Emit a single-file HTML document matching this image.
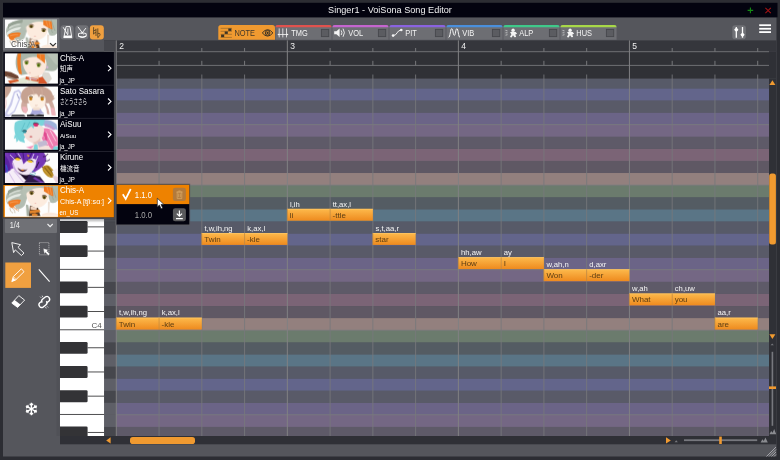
<!DOCTYPE html>
<html><head><meta charset="utf-8"><title>Singer1 - VoiSona Song Editor</title>
<style>html,body{margin:0;padding:0;background:#2c2d33;overflow:hidden}body{width:780px;height:460px}svg{display:block;will-change:transform}</style>
</head><body>
<svg width="780" height="460" viewBox="0 0 780 460" font-family="Liberation Sans, Noto Sans CJK JP, sans-serif">
<defs>
<linearGradient id="ng" x1="0" y1="0" x2="0" y2="1"><stop offset="0" stop-color="#fdba4c"/><stop offset="1" stop-color="#ee8a1e"/></linearGradient>
<linearGradient id="sh" x1="0" y1="0" x2="0" y2="1"><stop offset="0" stop-color="#000" stop-opacity="0.380"/><stop offset="1" stop-color="#000" stop-opacity="0"/></linearGradient>
<filter id="bl" x="-10%" y="-10%" width="120%" height="120%"><feGaussianBlur stdDeviation="0.6"/></filter>
<clipPath id="gridclip"><rect x="104" y="78.7" width="665" height="357.3"/></clipPath>
<clipPath id="pianoclip"><rect x="59.8" y="78.7" width="44.4" height="357.3"/></clipPath>
</defs>
<rect x="0.00" y="0.00" width="780.00" height="460.00" fill="#2c2d33" />
<rect x="3.00" y="17.30" width="773.50" height="439.20" fill="#55565c" />
<rect x="3.00" y="2.80" width="774.50" height="14.50" fill="#03030f" />
<text x="390.00" y="13.40" font-size="9.15" fill="#f0f0f0" text-anchor="middle">Singer1 - VoiSona Song Editor</text>
<path d="M747.6 10.4h5.6M750.4 7.6v5.6" stroke="#148a14" stroke-width="1.1" fill="none"/>
<path d="M765.4 7.8l5.4 5.4M770.8 7.8l-5.4 5.4" stroke="#a01414" stroke-width="1.1" fill="none"/>
<rect x="104.00" y="40.40" width="672.50" height="11.30" fill="#35363c" />
<rect x="104.00" y="40.40" width="12.30" height="11.30" fill="#46474d" />
<rect x="104.00" y="51.70" width="665.00" height="27.00" fill="#303136" />
<g clip-path="url(#gridclip)">
<rect x="115.80" y="426.86" width="653.20" height="12.14" fill="#5e5a68" />
<rect x="104.00" y="426.86" width="12.30" height="12.14" fill="#46474d" />
<rect x="115.80" y="414.77" width="653.20" height="12.14" fill="#746784" />
<rect x="104.00" y="414.77" width="12.30" height="12.14" fill="#5e5f67" />
<rect x="115.80" y="402.68" width="653.20" height="12.14" fill="#6b6487" />
<rect x="104.00" y="402.68" width="12.30" height="12.14" fill="#5e5f67" />
<rect x="115.80" y="390.59" width="653.20" height="12.14" fill="#595a68" />
<rect x="104.00" y="390.59" width="12.30" height="12.14" fill="#46474d" />
<rect x="115.80" y="378.50" width="653.20" height="12.14" fill="#63658b" />
<rect x="104.00" y="378.50" width="12.30" height="12.14" fill="#5e5f67" />
<rect x="115.80" y="366.41" width="653.20" height="12.14" fill="#575a68" />
<rect x="104.00" y="366.41" width="12.30" height="12.14" fill="#46474d" />
<rect x="115.80" y="354.32" width="653.20" height="12.14" fill="#5a7586" />
<rect x="104.00" y="354.32" width="12.30" height="12.14" fill="#5e5f67" />
<rect x="115.80" y="342.23" width="653.20" height="12.14" fill="#545c63" />
<rect x="104.00" y="342.23" width="12.30" height="12.14" fill="#46474d" />
<rect x="115.80" y="330.14" width="653.20" height="12.14" fill="#6b7b6d" />
<rect x="104.00" y="330.14" width="12.30" height="12.14" fill="#5e5f67" />
<rect x="115.80" y="318.05" width="653.20" height="12.14" fill="#93807e" />
<rect x="104.00" y="318.05" width="12.30" height="12.14" fill="#6b6d79" />
<rect x="115.80" y="305.96" width="653.20" height="12.14" fill="#5f5864" />
<rect x="104.00" y="305.96" width="12.30" height="12.14" fill="#46474d" />
<rect x="115.80" y="293.87" width="653.20" height="12.14" fill="#7b6476" />
<rect x="104.00" y="293.87" width="12.30" height="12.14" fill="#5e5f67" />
<rect x="115.80" y="281.78" width="653.20" height="12.14" fill="#5e5a68" />
<rect x="104.00" y="281.78" width="12.30" height="12.14" fill="#46474d" />
<rect x="115.80" y="269.69" width="653.20" height="12.14" fill="#746784" />
<rect x="104.00" y="269.69" width="12.30" height="12.14" fill="#5e5f67" />
<rect x="115.80" y="257.60" width="653.20" height="12.14" fill="#6b6487" />
<rect x="104.00" y="257.60" width="12.30" height="12.14" fill="#5e5f67" />
<rect x="115.80" y="245.51" width="653.20" height="12.14" fill="#595a68" />
<rect x="104.00" y="245.51" width="12.30" height="12.14" fill="#46474d" />
<rect x="115.80" y="233.42" width="653.20" height="12.14" fill="#63658b" />
<rect x="104.00" y="233.42" width="12.30" height="12.14" fill="#5e5f67" />
<rect x="115.80" y="221.33" width="653.20" height="12.14" fill="#575a68" />
<rect x="104.00" y="221.33" width="12.30" height="12.14" fill="#46474d" />
<rect x="115.80" y="209.24" width="653.20" height="12.14" fill="#5a7586" />
<rect x="104.00" y="209.24" width="12.30" height="12.14" fill="#5e5f67" />
<rect x="115.80" y="197.15" width="653.20" height="12.14" fill="#545c63" />
<rect x="104.00" y="197.15" width="12.30" height="12.14" fill="#46474d" />
<rect x="115.80" y="185.06" width="653.20" height="12.14" fill="#6b7b6d" />
<rect x="104.00" y="185.06" width="12.30" height="12.14" fill="#5e5f67" />
<rect x="115.80" y="172.97" width="653.20" height="12.14" fill="#93807e" />
<rect x="104.00" y="172.97" width="12.30" height="12.14" fill="#5e5f67" />
<rect x="115.80" y="160.88" width="653.20" height="12.14" fill="#5f5864" />
<rect x="104.00" y="160.88" width="12.30" height="12.14" fill="#46474d" />
<rect x="115.80" y="148.79" width="653.20" height="12.14" fill="#7b6476" />
<rect x="104.00" y="148.79" width="12.30" height="12.14" fill="#5e5f67" />
<rect x="115.80" y="136.70" width="653.20" height="12.14" fill="#5e5a68" />
<rect x="104.00" y="136.70" width="12.30" height="12.14" fill="#46474d" />
<rect x="115.80" y="124.61" width="653.20" height="12.14" fill="#746784" />
<rect x="104.00" y="124.61" width="12.30" height="12.14" fill="#5e5f67" />
<rect x="115.80" y="112.52" width="653.20" height="12.14" fill="#6b6487" />
<rect x="104.00" y="112.52" width="12.30" height="12.14" fill="#5e5f67" />
<rect x="115.80" y="100.43" width="653.20" height="12.14" fill="#595a68" />
<rect x="104.00" y="100.43" width="12.30" height="12.14" fill="#46474d" />
<rect x="115.80" y="88.34" width="653.20" height="12.14" fill="#63658b" />
<rect x="104.00" y="88.34" width="12.30" height="12.14" fill="#5e5f67" />
<rect x="115.80" y="76.25" width="653.20" height="12.14" fill="#575a68" />
<rect x="104.00" y="76.25" width="12.30" height="12.14" fill="#46474d" />
<rect x="116.30" y="619.80" width="652.70" height="1.00" fill="#7d7d80" opacity="0.85"/>
<rect x="116.30" y="559.35" width="652.70" height="1.00" fill="#7d7d80" opacity="0.85"/>
<rect x="116.30" y="474.72" width="652.70" height="1.00" fill="#7d7d80" opacity="0.85"/>
<rect x="116.30" y="414.27" width="652.70" height="1.00" fill="#7d7d80" opacity="0.85"/>
<rect x="116.30" y="329.64" width="652.70" height="1.00" fill="#7d7d80" opacity="0.85"/>
<rect x="116.30" y="269.19" width="652.70" height="1.00" fill="#7d7d80" opacity="0.85"/>
<rect x="116.30" y="184.56" width="652.70" height="1.00" fill="#7d7d80" opacity="0.85"/>
<rect x="116.30" y="124.11" width="652.70" height="1.00" fill="#7d7d80" opacity="0.85"/>
<rect x="116.30" y="39.48" width="652.70" height="1.00" fill="#7d7d80" opacity="0.85"/>
</g>
<rect x="104.00" y="51.20" width="665.00" height="1.00" fill="#6e6f73" />
<rect x="116.00" y="64.90" width="653.00" height="1.00" fill="#6e6f73" />
<rect x="115.80" y="40.40" width="1.00" height="395.60" fill="#808083" />
<rect x="158.56" y="48.00" width="1.00" height="3.70" fill="#77787b" />
<rect x="158.56" y="60.80" width="1.00" height="4.60" fill="#77787b" />
<rect x="158.56" y="74.50" width="1.00" height="361.50" fill="#77787b" opacity="0.85"/>
<rect x="201.32" y="48.00" width="1.00" height="3.70" fill="#77787b" />
<rect x="201.32" y="60.80" width="1.00" height="4.60" fill="#77787b" />
<rect x="201.32" y="74.50" width="1.00" height="361.50" fill="#77787b" opacity="0.85"/>
<rect x="244.08" y="48.00" width="1.00" height="3.70" fill="#77787b" />
<rect x="244.08" y="60.80" width="1.00" height="4.60" fill="#77787b" />
<rect x="244.08" y="74.50" width="1.00" height="361.50" fill="#77787b" opacity="0.85"/>
<rect x="286.84" y="40.40" width="1.00" height="395.60" fill="#808083" />
<rect x="329.60" y="48.00" width="1.00" height="3.70" fill="#77787b" />
<rect x="329.60" y="60.80" width="1.00" height="4.60" fill="#77787b" />
<rect x="329.60" y="74.50" width="1.00" height="361.50" fill="#77787b" opacity="0.85"/>
<rect x="372.36" y="48.00" width="1.00" height="3.70" fill="#77787b" />
<rect x="372.36" y="60.80" width="1.00" height="4.60" fill="#77787b" />
<rect x="372.36" y="74.50" width="1.00" height="361.50" fill="#77787b" opacity="0.85"/>
<rect x="415.12" y="48.00" width="1.00" height="3.70" fill="#77787b" />
<rect x="415.12" y="60.80" width="1.00" height="4.60" fill="#77787b" />
<rect x="415.12" y="74.50" width="1.00" height="361.50" fill="#77787b" opacity="0.85"/>
<rect x="457.88" y="40.40" width="1.00" height="395.60" fill="#808083" />
<rect x="500.64" y="48.00" width="1.00" height="3.70" fill="#77787b" />
<rect x="500.64" y="60.80" width="1.00" height="4.60" fill="#77787b" />
<rect x="500.64" y="74.50" width="1.00" height="361.50" fill="#77787b" opacity="0.85"/>
<rect x="543.40" y="48.00" width="1.00" height="3.70" fill="#77787b" />
<rect x="543.40" y="60.80" width="1.00" height="4.60" fill="#77787b" />
<rect x="543.40" y="74.50" width="1.00" height="361.50" fill="#77787b" opacity="0.85"/>
<rect x="586.16" y="48.00" width="1.00" height="3.70" fill="#77787b" />
<rect x="586.16" y="60.80" width="1.00" height="4.60" fill="#77787b" />
<rect x="586.16" y="74.50" width="1.00" height="361.50" fill="#77787b" opacity="0.85"/>
<rect x="628.92" y="40.40" width="1.00" height="395.60" fill="#808083" />
<rect x="671.68" y="48.00" width="1.00" height="3.70" fill="#77787b" />
<rect x="671.68" y="60.80" width="1.00" height="4.60" fill="#77787b" />
<rect x="671.68" y="74.50" width="1.00" height="361.50" fill="#77787b" opacity="0.85"/>
<rect x="714.44" y="48.00" width="1.00" height="3.70" fill="#77787b" />
<rect x="714.44" y="60.80" width="1.00" height="4.60" fill="#77787b" />
<rect x="714.44" y="74.50" width="1.00" height="361.50" fill="#77787b" opacity="0.85"/>
<rect x="757.20" y="48.00" width="1.00" height="3.70" fill="#77787b" />
<rect x="757.20" y="60.80" width="1.00" height="4.60" fill="#77787b" />
<rect x="757.20" y="74.50" width="1.00" height="361.50" fill="#77787b" opacity="0.85"/>
<text x="119.20" y="48.70" font-size="8.5" fill="#f0f0f0" >2</text>
<text x="290.24" y="48.70" font-size="8.5" fill="#f0f0f0" >3</text>
<text x="461.28" y="48.70" font-size="8.5" fill="#f0f0f0" >4</text>
<text x="632.32" y="48.70" font-size="8.5" fill="#f0f0f0" >5</text>
<rect x="116.30" y="317.65" width="42.76" height="11.89" fill="url(#ng)" />
<rect x="116.30" y="317.65" width="42.76" height="0.80" fill="#ffc868" opacity="0.8"/>
<rect x="115.80" y="317.65" width="1.00" height="11.89" fill="#c98b3c" opacity="0.7"/>
<text x="118.80" y="326.65" font-size="8.0" fill="#5c3d12" >Twin</text>
<text x="118.90" y="315.35" font-size="7.7" fill="#f4f4f4" >t,w,ih,ng</text>
<rect x="159.06" y="317.65" width="42.76" height="11.89" fill="url(#ng)" />
<rect x="159.06" y="317.65" width="42.76" height="0.80" fill="#ffc868" opacity="0.8"/>
<rect x="158.56" y="317.65" width="1.00" height="11.89" fill="#c98b3c" opacity="0.7"/>
<text x="161.56" y="326.65" font-size="8.0" fill="#5c3d12" >-kle</text>
<text x="161.66" y="315.35" font-size="7.7" fill="#f4f4f4" >k,ax,l</text>
<rect x="201.82" y="233.02" width="42.76" height="11.89" fill="url(#ng)" />
<rect x="201.82" y="233.02" width="42.76" height="0.80" fill="#ffc868" opacity="0.8"/>
<rect x="201.32" y="233.02" width="1.00" height="11.89" fill="#c98b3c" opacity="0.7"/>
<text x="204.32" y="242.02" font-size="8.0" fill="#5c3d12" >Twin</text>
<text x="204.42" y="230.72" font-size="7.7" fill="#f4f4f4" >t,w,ih,ng</text>
<rect x="244.58" y="233.02" width="42.76" height="11.89" fill="url(#ng)" />
<rect x="244.58" y="233.02" width="42.76" height="0.80" fill="#ffc868" opacity="0.8"/>
<rect x="244.08" y="233.02" width="1.00" height="11.89" fill="#c98b3c" opacity="0.7"/>
<text x="247.08" y="242.02" font-size="8.0" fill="#5c3d12" >-kle</text>
<text x="247.18" y="230.72" font-size="7.7" fill="#f4f4f4" >k,ax,l</text>
<rect x="287.34" y="208.84" width="42.76" height="11.89" fill="url(#ng)" />
<rect x="287.34" y="208.84" width="42.76" height="0.80" fill="#ffc868" opacity="0.8"/>
<rect x="286.84" y="208.84" width="1.00" height="11.89" fill="#c98b3c" opacity="0.7"/>
<text x="289.84" y="217.84" font-size="8.0" fill="#5c3d12" >li</text>
<text x="289.94" y="206.54" font-size="7.7" fill="#f4f4f4" >l,ih</text>
<rect x="330.10" y="208.84" width="42.76" height="11.89" fill="url(#ng)" />
<rect x="330.10" y="208.84" width="42.76" height="0.80" fill="#ffc868" opacity="0.8"/>
<rect x="329.60" y="208.84" width="1.00" height="11.89" fill="#c98b3c" opacity="0.7"/>
<text x="332.60" y="217.84" font-size="8.0" fill="#5c3d12" >-ttle</text>
<text x="332.70" y="206.54" font-size="7.7" fill="#f4f4f4" >tt,ax,l</text>
<rect x="372.86" y="233.02" width="42.76" height="11.89" fill="url(#ng)" />
<rect x="372.86" y="233.02" width="42.76" height="0.80" fill="#ffc868" opacity="0.8"/>
<rect x="372.36" y="233.02" width="1.00" height="11.89" fill="#c98b3c" opacity="0.7"/>
<text x="375.36" y="242.02" font-size="8.0" fill="#5c3d12" >star</text>
<text x="375.46" y="230.72" font-size="7.7" fill="#f4f4f4" >s,t,aa,r</text>
<rect x="458.38" y="257.20" width="42.76" height="11.89" fill="url(#ng)" />
<rect x="458.38" y="257.20" width="42.76" height="0.80" fill="#ffc868" opacity="0.8"/>
<rect x="457.88" y="257.20" width="1.00" height="11.89" fill="#c98b3c" opacity="0.7"/>
<text x="460.88" y="266.20" font-size="8.0" fill="#5c3d12" >How</text>
<text x="460.98" y="254.90" font-size="7.7" fill="#f4f4f4" >hh,aw</text>
<rect x="501.14" y="257.20" width="42.76" height="11.89" fill="url(#ng)" />
<rect x="501.14" y="257.20" width="42.76" height="0.80" fill="#ffc868" opacity="0.8"/>
<rect x="500.64" y="257.20" width="1.00" height="11.89" fill="#c98b3c" opacity="0.7"/>
<text x="503.64" y="266.20" font-size="8.0" fill="#5c3d12" >I</text>
<text x="503.74" y="254.90" font-size="7.7" fill="#f4f4f4" >ay</text>
<rect x="543.90" y="269.29" width="42.76" height="11.89" fill="url(#ng)" />
<rect x="543.90" y="269.29" width="42.76" height="0.80" fill="#ffc868" opacity="0.8"/>
<rect x="543.40" y="269.29" width="1.00" height="11.89" fill="#c98b3c" opacity="0.7"/>
<text x="546.40" y="278.29" font-size="8.0" fill="#5c3d12" >Won</text>
<text x="546.50" y="266.99" font-size="7.7" fill="#f4f4f4" >w,ah,n</text>
<rect x="586.66" y="269.29" width="42.76" height="11.89" fill="url(#ng)" />
<rect x="586.66" y="269.29" width="42.76" height="0.80" fill="#ffc868" opacity="0.8"/>
<rect x="586.16" y="269.29" width="1.00" height="11.89" fill="#c98b3c" opacity="0.7"/>
<text x="589.16" y="278.29" font-size="8.0" fill="#5c3d12" >-der</text>
<text x="589.26" y="266.99" font-size="7.7" fill="#f4f4f4" >d,axr</text>
<rect x="629.42" y="293.47" width="42.76" height="11.89" fill="url(#ng)" />
<rect x="629.42" y="293.47" width="42.76" height="0.80" fill="#ffc868" opacity="0.8"/>
<rect x="628.92" y="293.47" width="1.00" height="11.89" fill="#c98b3c" opacity="0.7"/>
<text x="631.92" y="302.47" font-size="8.0" fill="#5c3d12" >What</text>
<text x="632.02" y="291.17" font-size="7.7" fill="#f4f4f4" >w,ah</text>
<rect x="672.18" y="293.47" width="42.76" height="11.89" fill="url(#ng)" />
<rect x="672.18" y="293.47" width="42.76" height="0.80" fill="#ffc868" opacity="0.8"/>
<rect x="671.68" y="293.47" width="1.00" height="11.89" fill="#c98b3c" opacity="0.7"/>
<text x="674.68" y="302.47" font-size="8.0" fill="#5c3d12" >you</text>
<text x="674.78" y="291.17" font-size="7.7" fill="#f4f4f4" >ch,uw</text>
<rect x="714.94" y="317.65" width="42.76" height="11.89" fill="url(#ng)" />
<rect x="714.94" y="317.65" width="42.76" height="0.80" fill="#ffc868" opacity="0.8"/>
<rect x="714.44" y="317.65" width="1.00" height="11.89" fill="#c98b3c" opacity="0.7"/>
<text x="717.44" y="326.65" font-size="8.0" fill="#5c3d12" >are</text>
<text x="717.54" y="315.35" font-size="7.7" fill="#f4f4f4" >aa,r</text>
<g clip-path="url(#pianoclip)">
<rect x="59.80" y="78.00" width="44.40" height="358.00" fill="#ffffff" />
<rect x="58.00" y="680.45" width="29.60" height="11.89" fill="#333336" rx="1.3"/>
<rect x="87.50" y="685.84" width="16.80" height="0.90" fill="#3c3c3e" />
<rect x="58.00" y="656.27" width="29.60" height="11.89" fill="#333336" rx="1.3"/>
<rect x="87.50" y="661.66" width="16.80" height="0.90" fill="#3c3c3e" />
<rect x="58.00" y="632.09" width="29.60" height="11.89" fill="#333336" rx="1.3"/>
<rect x="87.50" y="637.48" width="16.80" height="0.90" fill="#3c3c3e" />
<rect x="60.00" y="619.50" width="44.30" height="0.90" fill="#3c3c3e" />
<rect x="58.00" y="595.82" width="29.60" height="11.89" fill="#333336" rx="1.3"/>
<rect x="87.50" y="601.21" width="16.80" height="0.90" fill="#3c3c3e" />
<rect x="58.00" y="571.64" width="29.60" height="11.89" fill="#333336" rx="1.3"/>
<rect x="87.50" y="577.03" width="16.80" height="0.90" fill="#3c3c3e" />
<rect x="60.00" y="559.05" width="44.30" height="0.90" fill="#3c3c3e" />
<rect x="58.00" y="535.37" width="29.60" height="11.89" fill="#333336" rx="1.3"/>
<rect x="87.50" y="540.76" width="16.80" height="0.90" fill="#3c3c3e" />
<rect x="58.00" y="511.19" width="29.60" height="11.89" fill="#333336" rx="1.3"/>
<rect x="87.50" y="516.58" width="16.80" height="0.90" fill="#3c3c3e" />
<rect x="58.00" y="487.01" width="29.60" height="11.89" fill="#333336" rx="1.3"/>
<rect x="87.50" y="492.41" width="16.80" height="0.90" fill="#3c3c3e" />
<rect x="60.00" y="474.42" width="44.30" height="0.90" fill="#3c3c3e" />
<rect x="58.00" y="450.74" width="29.60" height="11.89" fill="#333336" rx="1.3"/>
<rect x="87.50" y="456.14" width="16.80" height="0.90" fill="#3c3c3e" />
<rect x="58.00" y="426.56" width="29.60" height="11.89" fill="#333336" rx="1.3"/>
<rect x="87.50" y="431.96" width="16.80" height="0.90" fill="#3c3c3e" />
<rect x="60.00" y="413.97" width="44.30" height="0.90" fill="#3c3c3e" />
<rect x="58.00" y="390.29" width="29.60" height="11.89" fill="#333336" rx="1.3"/>
<rect x="87.50" y="395.69" width="16.80" height="0.90" fill="#3c3c3e" />
<rect x="58.00" y="366.11" width="29.60" height="11.89" fill="#333336" rx="1.3"/>
<rect x="87.50" y="371.51" width="16.80" height="0.90" fill="#3c3c3e" />
<rect x="58.00" y="341.93" width="29.60" height="11.89" fill="#333336" rx="1.3"/>
<rect x="87.50" y="347.33" width="16.80" height="0.90" fill="#3c3c3e" />
<rect x="60.00" y="329.34" width="44.30" height="0.90" fill="#3c3c3e" />
<rect x="58.00" y="305.66" width="29.60" height="11.89" fill="#333336" rx="1.3"/>
<rect x="87.50" y="311.06" width="16.80" height="0.90" fill="#3c3c3e" />
<rect x="58.00" y="281.48" width="29.60" height="11.89" fill="#333336" rx="1.3"/>
<rect x="87.50" y="286.88" width="16.80" height="0.90" fill="#3c3c3e" />
<rect x="60.00" y="268.89" width="44.30" height="0.90" fill="#3c3c3e" />
<rect x="58.00" y="245.21" width="29.60" height="11.89" fill="#333336" rx="1.3"/>
<rect x="87.50" y="250.61" width="16.80" height="0.90" fill="#3c3c3e" />
<rect x="58.00" y="221.03" width="29.60" height="11.89" fill="#333336" rx="1.3"/>
<rect x="87.50" y="226.43" width="16.80" height="0.90" fill="#3c3c3e" />
<rect x="58.00" y="196.85" width="29.60" height="11.89" fill="#333336" rx="1.3"/>
<rect x="87.50" y="202.25" width="16.80" height="0.90" fill="#3c3c3e" />
<rect x="60.00" y="184.26" width="44.30" height="0.90" fill="#3c3c3e" />
<rect x="58.00" y="160.58" width="29.60" height="11.89" fill="#333336" rx="1.3"/>
<rect x="87.50" y="165.98" width="16.80" height="0.90" fill="#3c3c3e" />
<rect x="58.00" y="136.40" width="29.60" height="11.89" fill="#333336" rx="1.3"/>
<rect x="87.50" y="141.80" width="16.80" height="0.90" fill="#3c3c3e" />
<rect x="60.00" y="123.81" width="44.30" height="0.90" fill="#3c3c3e" />
<rect x="58.00" y="100.13" width="29.60" height="11.89" fill="#333336" rx="1.3"/>
<rect x="87.50" y="105.53" width="16.80" height="0.90" fill="#3c3c3e" />
<rect x="58.00" y="75.95" width="29.60" height="11.89" fill="#333336" rx="1.3"/>
<rect x="87.50" y="81.34" width="16.80" height="0.90" fill="#3c3c3e" />
<rect x="58.00" y="51.77" width="29.60" height="11.89" fill="#333336" rx="1.3"/>
<rect x="87.50" y="57.16" width="16.80" height="0.90" fill="#3c3c3e" />
<rect x="60.00" y="39.18" width="44.30" height="0.90" fill="#3c3c3e" />
</g>
<rect x="56.50" y="52.00" width="3.30" height="384.00" fill="#505157" />
<text x="91.50" y="327.60" font-size="8" fill="#555" >C4</text>
<rect x="769.00" y="78.40" width="7.30" height="357.60" fill="#2f3036" />
<rect x="769.00" y="51.70" width="7.30" height="26.70" fill="#2f3036" />
<rect x="769.20" y="173.40" width="6.70" height="71.20" fill="#f09a30" rx="2.5"/>
<path d="M769.4 84.9l3-4.6l3 4.6z" fill="#f09a30"/>
<path d="M769.4 334.3l3 4.6l3-4.6z" fill="#f09a30"/>
<rect x="771.60" y="351.80" width="1.60" height="74.00" fill="#77787e" />
<rect x="769.00" y="386.40" width="7.00" height="2.60" fill="#f09a30" />
<path d="M770.6 345.2l1.6-1.8l1.6 1.8z" fill="#77787e"/>
<path d="M769.4 434.3l1.8-3.4l1.4 1.8l1.6-3.6l2 5.2z" fill="#8a8b90"/>
<rect x="60.00" y="436.00" width="716.30" height="8.30" fill="#2f3036" />
<rect x="130.00" y="437.00" width="65.00" height="7.00" fill="#f09a30" rx="2.8"/>
<path d="M110.600 437.300l-4.400 3.100l4.400 3.100z" fill="#f09a30"/>
<path d="M666 437.2l4.8 3.2l-4.8 3.2z" fill="#f09a30"/>
<path d="M674.6 442.2l1.6-2l1.6 2z" fill="#77787e"/>
<rect x="684.00" y="439.30" width="73.20" height="1.80" fill="#77787e" />
<rect x="719.20" y="436.60" width="2.60" height="7.40" fill="#f09a30" />
<path d="M760.6 442.6l1.8-3.4l1.4 1.8l1.6-3.6l2.4 5.2z" fill="#8a8b90"/>
<path d="M776 447l-9.5 9.5M776 449.5l-7 7M776 452l-4.5 4.5M776 454.5l-2 2" stroke="#b8b8bc" stroke-width="0.8" fill="none"/>
<path d="M218.3 39.8v-12q0-2.700 2.700-2.700h51.300q2.700 0 2.700 2.700v12z" fill="#f09a30"/>
<text transform="translate(234.40 35.80) scale(0.905 1)" font-size="8.2" fill="#40372a" >NOTE</text>
<g stroke="#6a5128" stroke-width="0.5"><path d="M220.600 28.300h11.300M220.600 31.300h11.300M220.600 34.300h11.300M220.600 37.400h11.300"/></g><g fill="#3c3324"><rect x="228.300" y="28.500" width="3.100" height="2.400"/><rect x="224.700" y="31.500" width="3.100" height="2.400"/><rect x="221.100" y="34.600" width="3.100" height="2.500"/></g>
<g fill="none" stroke="#3c3324" stroke-width="1"><path d="M262.300 32.900q5.300-6.400 10.600 0q-5.300 6.400-10.600 0z"/><circle cx="267.600" cy="32.900" r="2.300"/></g><circle cx="267.600" cy="32.900" r="1.100" fill="#3c3324"/>
<path d="M275.4 39.8v-12.500q0-2.200 2.200-2.200h51.800q2.200 0 2.200 2.200v12.500z" fill="#6d6e73"/>
<path d="M275.4 27.300q0-2.200 2.200-2.200h51.800q2.200 0 2.200 2.200z" fill="#e0524e"/>
<text transform="translate(291.30 35.80) scale(0.89 1)" font-size="8.35" fill="#f4f4f4" >TMG</text>
<rect x="321.40" y="29.40" width="7.30" height="7.20" fill="#5b5c61" stroke="#47484d" stroke-width="0.9"/>
<path d="M332.4 39.8v-12.500q0-2.200 2.200-2.200h51.800q2.200 0 2.200 2.200v12.500z" fill="#6d6e73"/>
<path d="M332.4 27.300q0-2.200 2.200-2.200h51.800q2.200 0 2.200 2.200z" fill="#c565cf"/>
<text transform="translate(348.30 35.80) scale(0.89 1)" font-size="8.35" fill="#f4f4f4" >VOL</text>
<rect x="378.40" y="29.40" width="7.30" height="7.20" fill="#5b5c61" stroke="#47484d" stroke-width="0.9"/>
<path d="M389.4 39.8v-12.500q0-2.200 2.200-2.200h51.800q2.200 0 2.200 2.200v12.500z" fill="#6d6e73"/>
<path d="M389.4 27.300q0-2.200 2.200-2.200h51.800q2.200 0 2.200 2.200z" fill="#8a63e0"/>
<text transform="translate(405.30 35.80) scale(0.89 1)" font-size="8.35" fill="#f4f4f4" >PIT</text>
<rect x="435.40" y="29.40" width="7.30" height="7.20" fill="#5b5c61" stroke="#47484d" stroke-width="0.9"/>
<path d="M446.4 39.8v-12.500q0-2.200 2.200-2.200h51.800q2.200 0 2.200 2.200v12.500z" fill="#6d6e73"/>
<path d="M446.4 27.300q0-2.200 2.200-2.200h51.800q2.200 0 2.200 2.200z" fill="#4a8fdc"/>
<text transform="translate(462.30 35.80) scale(0.89 1)" font-size="8.35" fill="#f4f4f4" >VIB</text>
<rect x="492.40" y="29.40" width="7.30" height="7.20" fill="#5b5c61" stroke="#47484d" stroke-width="0.9"/>
<path d="M503.4 39.8v-12.500q0-2.200 2.200-2.200h51.800q2.200 0 2.200 2.200v12.500z" fill="#6d6e73"/>
<path d="M503.4 27.300q0-2.200 2.200-2.200h51.800q2.200 0 2.200 2.200z" fill="#3fc98a"/>
<text transform="translate(519.30 35.80) scale(0.89 1)" font-size="8.35" fill="#f4f4f4" >ALP</text>
<rect x="549.40" y="29.40" width="7.30" height="7.20" fill="#5b5c61" stroke="#47484d" stroke-width="0.9"/>
<path d="M560.4 39.8v-12.500q0-2.200 2.200-2.200h51.800q2.200 0 2.200 2.200v12.500z" fill="#6d6e73"/>
<path d="M560.4 27.300q0-2.200 2.200-2.200h51.800q2.200 0 2.200 2.200z" fill="#a8d848"/>
<text transform="translate(576.30 35.80) scale(0.89 1)" font-size="8.35" fill="#f4f4f4" >HUS</text>
<rect x="606.40" y="29.40" width="7.30" height="7.20" fill="#5b5c61" stroke="#47484d" stroke-width="0.9"/>
<g stroke="#f4f4f4" stroke-width="0.8" fill="none"><path d="M279.200 28.400v9M282.800 28.400v9M286.500 28.400v9M278 34.500h10"/></g><path d="M277.300 34.500l1.800-1.100v2.200zM288.600 34.500l-1.800-1.100v2.200z" fill="#f4f4f4"/>
<g fill="#f4f4f4"><path d="M334.200 31.200h2.200l3.200-2.800v8.600l-3.200-2.800h-2.200z"/></g><g stroke="#f4f4f4" stroke-width="0.9" fill="none"><path d="M341.200 30.400q1.500 2.300 0 4.600M343 28.600q2.800 4.100 0 8.200"/></g>
<g stroke="#f4f4f4" stroke-width="1" fill="none"><path d="M393.100 35.600c4.400 0 3.600-5.600 8.200-5.600"/></g><circle cx="393.100" cy="35.600" r="1.300" fill="#f4f4f4"/><circle cx="401.300" cy="30" r="1.300" fill="#f4f4f4"/>
<g stroke="#f4f4f4" stroke-width="1" fill="none"><path d="M448.600 37.400c1.700 0 1.700-8.800 3.100-8.800s1.300 6.800 2.600 6.800s1.200-6.800 2.600-6.800s1.400 8.800 3.100 8.800"/></g>
<g fill="#f4f4f4"><circle cx="513.1" cy="30.200" r="1.700"/><path d="M510.1 32.200l2.200-0.600l3.400 0.400l1.400 1.800l-1.800 0.600l0.900 2.600l-1.700 0.200l-1.500-2l-1.400 2.200l-1.700-0.400l1.500-2.800z"/></g><g stroke="#f4f4f4" stroke-width="0.6"><path d="M505.5 30.400l2 0.500M505.5 32.800h2M505.5 35.200l2-0.500"/></g>
<g fill="#f4f4f4"><circle cx="570.1" cy="30.200" r="1.700"/><path d="M567.1 32.200l2.200-0.600l3.400 0.400l1.400 1.800l-1.800 0.600l0.900 2.600l-1.700 0.200l-1.500-2l-1.400 2.200l-1.700-0.400l1.500-2.800z"/></g><g stroke="#f4f4f4" stroke-width="0.6"><path d="M562.5 30.400l2 0.500M562.5 32.800h2M562.5 35.200l2-0.500"/></g>
<rect x="732.30" y="25.20" width="13.60" height="14.00" fill="#707176" rx="2.800"/>
<g stroke="#fff" stroke-width="1.300" fill="none"><path d="M736.300 27v10.700M742.500 27v10.700"/></g><path d="M734.200 29.800l1.100-1.500h2l1.100 1.500l-1.100 1.500h-2zM740.400 34.700l1.100-1.500h2l1.100 1.500l-1.100 1.500h-2z" fill="#fff"/>
<rect x="759.20" y="24.30" width="11.80" height="1.80" fill="#ffffff" />
<rect x="759.20" y="27.85" width="11.80" height="1.80" fill="#ffffff" />
<rect x="759.20" y="31.20" width="11.80" height="1.80" fill="#ffffff" />
<rect x="60.50" y="25.20" width="13.20" height="14.40" fill="#707176" rx="3"/>
<rect x="75.30" y="25.20" width="13.20" height="14.40" fill="#707176" rx="3"/>
<rect x="89.90" y="25.20" width="13.90" height="14.40" fill="#f0a040" rx="3"/>
<g stroke="#fff" stroke-width="0.9" fill="none" stroke-linejoin="round"><path d="M66.100 26.600h3.900l1.800 11h-8zM63.200 27.300l4.600 7.600M67.900 28.400v6"/></g><path d="M64.100 35.600h7.400l0.300 2.100h-8.100z" fill="#fff"/>
<g stroke="#fff" stroke-width="0.9" fill="none"><path d="M77.900 26.800l5.700 7.700M85.900 28.100l-4.500 5.800"/><path d="M78.500 33.600v2.600q3.900 2.400 7.700 0v-2.600"/><path d="M78.500 33.600q3.900-1.800 7.700 0"/></g><path d="M78.500 35.400q3.900 2 7.700 0v1.300q-3.900 2-7.700 0z" fill="#fff"/>
<g stroke="#4a3a20" stroke-width="0.8" fill="none"><path d="M93.600 27.200v7.200M96 28.800v7.200M93.600 30.800l2.400-0.900M93.600 33.400l2.400-0.900"/><path d="M97.800 28.400v9.300M97.800 33.600c2.800-1.400 3.200 1.800 0 4"/></g>
<rect x="2.90" y="18.00" width="56.60" height="32.50" fill="#6b6c72" rx="1"/>
<rect x="5.10" y="19.70" width="51.90" height="28.30" fill="#fdfdfd" />
<svg x="5.10" y="19.70" width="51.90" height="28.30" viewBox="0 0 53 30" preserveAspectRatio="none">
<rect width="53" height="30" fill="#fdfdfd"/><g filter="url(#bl)">
<path d="M1.500 9c1.500-4 6-7.500 13-8.500l9-0.500l-1 11l-2.500 8c-2 3-5 4.500-8.500 4l-3-6l-6 1c-1.500-2.500-2-6-1-9z" fill="#b3bdb2"/>
<path d="M3 5c4-3 10-5 17-5l-3 3.500c-5 0-10 2-14 6z" fill="#96a294"/>
<path d="M1.500 14c3-3.500 9-6 15-6l-2 2.500c-5 0.500-9 2.500-12.500 6z" fill="#e6ebe4"/>
<path d="M4 8c3-2 7-3.500 12-4l-1.500 1.800c-4 0.500-7 1.800-10 4z" fill="#d4dbd2"/>
<path d="M3.500 15.500c3-1.500 8-2.500 12.500-1.500l-1.500 4c-3.500 0-5.500 2-6.500 4.500l-3-1.500c-1.500-2-2-4-1.500-5.500z" fill="#ef7a24"/>
<path d="M5 17c2.500-1 5.500-1.500 8.500-1" stroke="#f8b070" stroke-width="0.600" fill="none"/>
<path d="M7 21.500c1.500 1 3 3 3 5.500M12 20c1.500 1.500 2 3.500 1.500 5.500M5 22c0 2 1 4 3 5" stroke="#c9bba6" stroke-width="0.900" fill="none"/>
<path d="M9 21c1 1.500 2 2.500 3.500 3" stroke="#ef7a24" stroke-width="0.900" fill="none"/>
<path d="M40 0h13v14.500c-2 2.500-5 3-7.500 2l-3-8z" fill="#b0bbaf"/>
<path d="M47 0l4 12M43.500 0l5 14" stroke="#909d8f" stroke-width="0.600" fill="none"/>
<path d="M21 18.500l2.300 0.500l1.500 11h-3z" fill="#a9b2a6"/>
<path d="M25 19.500l8 2l2.500 8.500h-11.500z" fill="#4c3524"/>
<path d="M25.500 20l6.500 2l-0.500 2l-6-0.500z" fill="#f0d4c0"/>
<path d="M25 24.500l9.500-1l1 2.500l-10.500 1.500z" fill="#e2842c"/>
<path d="M27 28l3-1l3 1.500l-1 1.500h-5z" fill="#e2842c"/>
<path d="M37 28.500c4-2.500 10-2.500 16-0.500v2h-16z" fill="#fbe9dc"/>
<path d="M43 15.500l2 0.500l-0.700 10.500l-1.300 0z" fill="#ece0d6"/>
<path d="M21.500 5c2-4.500 12-6 20.500-3c2.500 4.500 2.500 10-0.500 14.500c-3 4-8 6-12 5c-5-2-9-9.500-8-16.500z" fill="#fcebde"/>
<path d="M18 0h23l-1 2.800c-5-1.800-12-0.800-17.500 3.700c-1.500 1-2.500 3-3 5l-2-5z" fill="#b6c0b4"/>
<path d="M39 0.500l8.500 1.200l1 8.800c-3-1-6-2.800-9.500-5z" fill="#ef7a24"/>
<path d="M42 1l2 7M45 1.500l1.500 7.500" stroke="#f8a860" stroke-width="0.600" fill="none"/>
<ellipse cx="26.700" cy="7.300" rx="1.900" ry="1.800" fill="#75631e"/><ellipse cx="39.400" cy="11.500" rx="1.900" ry="1.800" fill="#75631e"/>
<path d="M24.300 6.200c1.500-1.400 3.500-1.400 5 0M37 10.200c1.500-1.300 3.600-1.100 5 0.500" stroke="#4a3020" stroke-width="0.800" fill="none"/>
<ellipse cx="26.700" cy="7.500" rx="0.800" ry="0.900" fill="#2e2408"/><ellipse cx="39.400" cy="11.700" rx="0.800" ry="0.900" fill="#2e2408"/>
<ellipse cx="30.500" cy="17.500" rx="1" ry="0.400" fill="#e8a098"/>
</g></svg>
<text x="11.00" y="47.00" font-size="8.2" fill="#4a4a4a" stroke="#fff" stroke-width="1.300" stroke-opacity="0.550" paint-order="stroke">Chis-A</text>
<path d="M50 43.100l3 2.900l3-2.900" stroke="#333" stroke-width="1.250" fill="none"/>
<rect x="4.90" y="218.50" width="52.10" height="14.40" fill="#707176" rx="1"/>
<text transform="translate(9.70 227.80) scale(0.9 1)" font-size="8.2" fill="#f0f0f0" >1/4</text>
<path d="M47.500 224l2.600 2.600l2.600-2.600" stroke="#f0f0f0" stroke-width="1.100" fill="none"/>
<rect x="5.30" y="262.50" width="25.70" height="25.40" fill="#f0a040" />
<path d="M11.800 242.600l8.800 2.100l-2.700 2.600l6.100 5.800l-2.600 2.400l-6.100-5.600l-1.700 2.700z" stroke="#fff" stroke-width="0.9" fill="none" stroke-linejoin="round"/>
<rect x="39.400" y="242.600" width="9.500" height="12.200" stroke="#dcdcdc" stroke-width="0.600" fill="none" stroke-dasharray="1.200 0.800"/>
<path d="M43.200 248.500l5.200 1.200l-1.500 1.300l2.900 3l-1.500 1.500l-2.900-3l-1 1.500z" fill="#fff" stroke="#55565c" stroke-width="0.400"/>
<path d="M11.800 281.600l1.500-5l8.100-7.800l2.600 2.900l-8 7.900z" stroke="#fff" stroke-width="0.900" fill="none" stroke-linejoin="round"/><path d="M11.800 281.600l1.200-3.800l2.700 2.600z" fill="#fff"/><path d="M13.500 276.800l2.500 2.700" stroke="#fff" stroke-width="0.700" fill="none"/>
<path d="M38.800 269.400l10.800 12.200" stroke="#fff" stroke-width="1.100" fill="none"/>
<path d="M11.800 303.100l7-7.500l5.800 4.500l-7 7.300z" stroke="#fff" stroke-width="0.900" fill="none" stroke-linejoin="round"/><path d="M11.800 303.100l2.800-3l5.800 4.400l-2.800 2.900z" fill="#fff"/>
<g transform="translate(44.300 302.200) scale(1.250) translate(-44.300 -302.200)"><g stroke="#fff" stroke-width="1.100" fill="none"><path d="M42.300 301.400l-1.600 1.200a2.200 2.200 0 0 0 2.600 3.500l2.200-1.700a2.200 2.200 0 0 0 0.500-3"/><path d="M46.300 302.600l1.600-1.200a2.200 2.200 0 0 0-2.600-3.500l-2.200 1.700a2.200 2.200 0 0 0-0.500 3"/></g><g stroke="#fff" stroke-width="0.600"><path d="M42.600 297l0.500 1.200M41 297.800l0.900 0.900M45.800 307.200l-0.500-1.200M47.400 306.400l-0.900-0.900"/></g></g>
<g stroke="#fff" stroke-width="1.150" fill="none" transform="translate(31.400 409) scale(1.140)"><path d="M0-5.500v11M-4.800-2.750l9.600 5.500M-4.800 2.750l9.600-5.500"/><path d="M-1.500-4.500l1.500 1.300l1.500-1.300M-1.500 4.500l1.500-1.300l1.500 1.300M-4.650-0.950l1.900-0.650l-0.400-1.950M4.650 0.950l-1.900 0.650l0.400 1.950M-4.650 0.950l1.900 0.650l-0.400 1.950M4.650-0.950l-1.900-0.650l0.400-1.950"/></g>
<rect x="59.80" y="218.20" width="56.40" height="4.60" fill="url(#sh)" />
<rect x="2.60" y="51.40" width="113.60" height="167.60" fill="#48494f" />
<rect x="3.40" y="52.00" width="110.50" height="165.30" fill="#03030f" />
<svg x="4.90" y="53.40" width="53.00" height="30.30" viewBox="0 0 53 30" preserveAspectRatio="none">
<rect width="53" height="30" fill="#fdfdfd"/><g filter="url(#bl)">
<path d="M38 18l6 1l3 6l-4 5h-8l2-8z" fill="#dcd8d0"/>
<path d="M0 17.500l6 1l7 3.500l1 2.500l-3 1l-11-3z" fill="#6e4432"/>
<path d="M2 22l9 3l-1 1.500l-8-2.500z" fill="#a89080"/>
<path d="M9 30l3-4.500l10-2.500l12 3l6 4z" fill="#e2e8d4"/>
<path d="M3 27l10-1.500l1 2l-9 2.500z" fill="#d8602e"/>
<path d="M12.500 0h40.500v13c-0.500 3-3 4.500-6 4.500l-6-0.500l-25 4.500c-3-2-5-6-5.300-11c-0.200-4 0.500-8 1.800-10.500z" fill="#aab6a9"/>
<path d="M41 0h12v12c-3-1-5-4-7-7z" fill="#b8c2b6"/>
<path d="M17.600 7c0.500-3 3-4.500 8-4.500h8c5 0 8 3 8 8c0 4-1.500 7.500-4.500 10c-3 2.500-7 3.500-10.500 2.500c-5-2-9-9-9-16z" fill="#fbe8db"/>
<path d="M26 23c3 0.500 6 0 8-1.500l0.500 3.500l-7 0.500z" fill="#ecccb8"/>
<path d="M12.700 0.500l3.600-0.500c-1 6-0.700 13 0.700 20.500l-2.800-0.300c-2-6-2.500-13-1.500-19.700z" fill="#ef7a24"/>
<path d="M16.300 0c-0.800 6-0.500 12 0.800 18l1.500 1c-1.500-6-1.500-12-0.500-19z" fill="#a4b0a4"/>
<path d="M16 0h24l0.500 6c-3-2-6-2.500-8.500-2.500c-5-0.500-11 0.500-14.500 4.500z" fill="#aab6a9"/>
<path d="M32 0.400l7.800 0.400l0.200 9c-2.500-2-5.500-4-8-5.800z" fill="#ef7a24"/>
<path d="M35 0.500l1 6" stroke="#f8a050" stroke-width="0.600" fill="none"/>
<ellipse cx="21.600" cy="9.300" rx="1.900" ry="1.800" fill="#76942a"/><ellipse cx="33.700" cy="11.600" rx="1.900" ry="1.900" fill="#76942a"/>
<path d="M19.300 8.200c1.500-1.300 3.300-1.300 4.800 0M31.300 10.200c1.500-1.200 3.600-1 5 0.600" stroke="#5a4030" stroke-width="0.700" fill="none"/>
<ellipse cx="21.600" cy="9.500" rx="0.800" ry="0.900" fill="#3a4a10"/><ellipse cx="33.700" cy="11.800" rx="0.800" ry="0.900" fill="#3a4a10"/>
<ellipse cx="25" cy="19" rx="0.900" ry="0.400" fill="#e09088"/>
<circle cx="42.300" cy="13.600" r="1.200" fill="#d8b8d8"/>
<path d="M21 22.800l13 2.600l-0.600 2.800l-13-2.600z" fill="#d8582c"/>
<path d="M33.500 24l4-1l5 7h-9z" fill="#d8582c"/>
<path d="M24 23.800l8 1.700l-0.300 1.200l-8-1.700z" fill="#cdb0c0"/>
<circle cx="25.500" cy="25.500" r="0.900" fill="#f4e8f0"/><circle cx="22.500" cy="28.500" r="0.800" fill="#f4e8f0"/>
</g></svg>
<text transform="translate(60.00 61.00) scale(0.97 1)" font-size="8.3" fill="#ffffff" >Chis-A</text>
<text x="60.00" y="71.30" font-size="6.4" fill="#ffffff" >知声</text>
<text transform="translate(59.60 82.80) scale(0.94 1)" font-size="6.5" fill="#ffffff" >ja_JP</text>
<path d="M108 65.40l3 2.900l-3 2.900" stroke="#fff" stroke-width="1.100" fill="none"/>
<rect x="3.40" y="84.80" width="110.50" height="0.70" fill="#2e2e3a" />
<svg x="4.90" y="86.50" width="53.00" height="30.30" viewBox="0 0 53 30" preserveAspectRatio="none">
<rect width="53" height="30" fill="#fdfdfd"/><g filter="url(#bl)">
<path d="M0 0h6.500c0 3-1 5.500-2.500 7.500c-1 2-2.500 3.500-4 4.500z" fill="#c6a292"/>
<path d="M0.500 12c1 3 0.500 7-0.500 10" stroke="#f0c8c8" stroke-width="1.200" fill="none"/>
<path d="M9 5l5-2l3 4l-2 6l-5 12l-6 5h-4v-4l5-9z" fill="#c9c9ea"/>
<path d="M10 6.500l3.500-1.500l2 3l-1.500 4l-5 12l-5 4l-2-1l5-9z" fill="#fbfbff"/>
<path d="M12 7l2 5" stroke="#8888c0" stroke-width="0.800" fill="none"/>
<path d="M18 13c-2 3-2.500 8-0.500 11.500c1 1.500 2.500 2 4 1.500l1.500-3c-1-3-1-7 0-10z" fill="#cfaa9e"/>
<path d="M17.200 20c0 3 1 5.500 3.500 6.500l2-2.500l-1.500-4z" fill="#efb4bc"/>
<path d="M41 12c3 4 5.500 9 6 16l3.500 0.500c0-6-2-13-5.500-17.500z" fill="#cfaa9e"/>
<path d="M45.500 21l4 0.500l1.200 7.500l-4-0.500z" fill="#efb4bc"/>
<path d="M39 17c2 3 3 6 3 10l2.500 1c0-4-1.500-8-3.500-11z" fill="#d0a8a0"/>
<path d="M16.500 13c-1.500-6 1-10.500 6-12.500c4-1.200 12-1.200 17 0c5 1.500 8 5 8.500 9l1.500-1l-1 3l2 0l-3 2.500l-4 2.500h-24z" fill="#c6a292"/>
<path d="M23 10c2-3.500 14-3.500 17 0c1.500 4 0.500 8-2 11c-2.500 2.500-5.500 3.500-8 2.500c-4-1.500-7.500-8-7-13.500z" fill="#fdf0e4"/>
<path d="M20 3c6-3 16-3 22 0l1.500 10c-2-3.500-4.500-5.500-7.500-6l-2 4l-2.500-4.500c-4 0-8.500 2.500-12 7z" fill="#c6a292"/>
<path d="M26 1c2 2 3 5 3 8M36 1.500c1 2 1.500 4 1 7" stroke="#d4b0a0" stroke-width="0.700" fill="none"/>
<ellipse cx="25.900" cy="12" rx="1.600" ry="1.900" fill="#c47c18"/><ellipse cx="37.300" cy="12.300" rx="1.600" ry="1.900" fill="#c47c18"/>
<path d="M24 10.600c1.200-1 2.800-1 4 0M35.400 10.800c1.200-1 2.800-1 4 0" stroke="#4a3428" stroke-width="0.800" fill="none"/>
<path d="M30 18.500c0.800 0.500 1.800 0.500 2.600 0" stroke="#c08070" stroke-width="0.400" fill="none"/>
<path d="M27.500 22l8 0c1 2 2.500 4 4 5l-15 1.500c1.500-2 2.500-4 3-6.500z" fill="#a9a9dc"/>
<path d="M28.500 20.500h6l0.500 3h-7z" fill="#f4e0d0"/>
<path d="M22 28l6-0.500l2 1l4-1l5 0.500v2h-17z" fill="#2a2a2e"/>
<path d="M7 28h12l2 2h-15z" fill="#3a3a40"/>
</g></svg>
<text transform="translate(60.00 94.10) scale(0.97 1)" font-size="8.3" fill="#ffffff" >Sato Sasara</text>
<text transform="translate(60.00 104.40) scale(0.72 1)" font-size="6.3" fill="#ffffff" >さとうささら</text>
<text transform="translate(59.60 115.90) scale(0.94 1)" font-size="6.5" fill="#ffffff" >ja_JP</text>
<path d="M108 98.50l3 2.900l-3 2.900" stroke="#fff" stroke-width="1.100" fill="none"/>
<rect x="3.40" y="117.90" width="110.50" height="0.70" fill="#2e2e3a" />
<svg x="4.90" y="119.60" width="53.00" height="30.30" viewBox="0 0 53 30" preserveAspectRatio="none">
<rect width="53" height="30" fill="#fdfdfd"/><g filter="url(#bl)">
<path d="M37 9c4-1.500 9 0 12 3.500l3.500 5l0.500 8l-3 1l1 3h-6l-1.500-4l-3.500 1.500l-2-6l-2-4z" fill="#f07cb0"/>
<path d="M41 12l7 14M45 10.500l6 11M39 16l4 9" stroke="#fde4ee" stroke-width="0.800" fill="none"/>
<path d="M37 12c2 3 3 6 3 10l2.500-1.500l-1-8z" fill="#e04c90"/>
<path d="M36 0.500c6-1 12 0.500 15.500 4l1 6l-4-2l-10-2.500z" fill="#9fb4dc"/>
<path d="M40 4c4 0.500 8 2.500 11 6l-3 0.500c-2-2-5-3-8-3.500z" fill="#c49ad0"/>
<path d="M10 3c2-2 6-3 12-3h18l-2 6l-12 4l-7 9l1 4l-5-1.500c-3-2-5-6-5.500-10.500c-0.300-3 0-6 0.500-8z" fill="#7ad4da"/>
<path d="M10 14l-1 5l2-1l0.500 4.500l2-2l2 3.500" fill="#7ad4da"/>
<path d="M27 20l9-2l2 6l6 2.500l3 3.500h-22l3-4z" fill="#f4e2dc"/>
<path d="M18 13.500c3-5 9-8.500 15-9l6 3.500c0.500 4-0.500 8-2.500 11c-2 3-5 4.500-8 4c-3-0.500-6-2.500-8-5z" fill="#f3e0da"/>
<path d="M28 22.500c3-0.500 5.500-2 7-4.500l0.500 4l-5 3z" fill="#e6c6be"/>
<path d="M12 2c7-2.500 17-2.500 25-1l0.500 3c-4-0.500-8 0.500-11 2.500c-3.500 2.500-6.500 5.500-9 9.500l-2.500 4c-3-5-4-12-3-18z" fill="#7ad4da"/>
<path d="M20 3l-4 9M25 2l-3 6M30 1.500l-1.500 3.500" stroke="#4eb4c0" stroke-width="0.600" fill="none"/>
<path d="M26 6.500l3.500-1l-1 3.500z" fill="#7ad4da"/>
<path d="M32.500 22.500l8.500-2.500l1.500 5l-8.500 2.500z" fill="#c2bad2"/>
<path d="M29.500 24.500l3 0l0.500 5.500h-4.500z" fill="#7ad4da"/>
<path d="M21 27.500l8-2l-3 3.500z" fill="#f490bc"/>
<path d="M49 26.500h4v3.500h-5.500z" fill="#7ad4da"/>
<path d="M28.500 4.200c1.500-1 3.800-0.800 5 0.500l-0.500 1.800c-1.500 0.700-3.300 0.400-4.500-0.600z" fill="#d4286c"/>
<path d="M28 4.200c2-1.400 4.300-1.200 6 0.400" stroke="#3a2030" stroke-width="0.700" fill="none"/>
<path d="M17.800 11.300c1-1 2.800-0.900 3.800 0.200l-0.500 1.600c-1 0.500-2.300 0.300-3.100-0.400z" fill="#2c8e9c"/>
<path d="M17.300 11.400c1.400-1.300 3.300-1.200 4.700 0.200" stroke="#203038" stroke-width="0.700" fill="none"/>
<ellipse cx="26" cy="17" rx="1.500" ry="0.800" fill="#d4787a"/>
</g></svg>
<text transform="translate(60.00 127.20) scale(0.97 1)" font-size="8.3" fill="#ffffff" >AiSuu</text>
<text x="60.00" y="137.50" font-size="6.1" fill="#ffffff" >AiSuu</text>
<text transform="translate(59.60 149.00) scale(0.94 1)" font-size="6.5" fill="#ffffff" >ja_JP</text>
<path d="M108 131.60l3 2.900l-3 2.900" stroke="#fff" stroke-width="1.100" fill="none"/>
<rect x="3.40" y="151.00" width="110.50" height="0.70" fill="#2e2e3a" />
<svg x="4.90" y="152.70" width="53.00" height="30.30" viewBox="0 0 53 30" preserveAspectRatio="none">
<rect width="53" height="30" fill="#fdfdfd"/><g filter="url(#bl)">
<path d="M0 0h39c2.500 3 3 7 1.500 10c-1.500 3-4 5-6 6l-4.500 3l-30 6z" fill="#7638b6"/>
<path d="M38 4c2 0 4-1 5-3M40 8c2 0.500 3.500 0 5-1.500M37 14c1.500 1.500 3 2 5 1.500" stroke="#2a1040" stroke-width="0.800" fill="none"/>
<path d="M0 19l9-4l12 9l10 6h-31z" fill="#f6eef8"/>
<path d="M4 20l6 10M9 18l10 12" stroke="#b898d8" stroke-width="0.600" fill="none"/>
<path d="M8 5c3-4 17-4 22.500 0c2 5 0 10.500-4 14.500c-3.500 3-8 4-11.500 2c-5-3-8.500-10-7-16.500z" fill="#f4e8f4"/>
<path d="M8.500 10c1 5 3.500 9 7 11.500l-1 0.500c-4-2.500-7-7-7.500-12z" fill="#c8a8e0"/>
<path d="M3 0h32l-2.500 8c-3-2.500-6.500-3-9.500-1l-4.500 4.500l-1.500-5c-4-1.500-8-0.500-11.500 3z" fill="#6b2eb0"/>
<path d="M10 0l4 6M18 0l1 7M27 0l-3 6" stroke="#3a1470" stroke-width="0.800" fill="none"/>
<path d="M22 1.500l3 1.500l-2 1.500z" fill="#e8a030"/><path d="M5 2l5 5M13 0.500l3 5M29 1l-2 5M33 3l-2 5" stroke="#e8dcf4" stroke-width="0.900" fill="none"/><path d="M1 8l3 7M34 9l-3 6" stroke="#1c0c26" stroke-width="0.900" fill="none"/>
<path d="M0 3c3.500 2.500 5.500 8 5.500 14.500l-5.500 2.500z" fill="#5a24a2"/>
<path d="M1 12c1 2 1.500 5 1 8" stroke="#2a6ad8" stroke-width="1" fill="none"/>
<path d="M12.500 18.500c3 3 8 5 12.500 3l3.500 3l-8 2.500z" fill="#1c0c26"/>
<path d="M24 21.500l11 2l5 6.500h-21l3-4z" fill="#2e1e48"/>
<path d="M25 20.500l5 2M27 18l4 3" stroke="#30a0b0" stroke-width="0.700" fill="none"/>
<path d="M30 24l10 6h-4l-8-4.500z" fill="#7038b0"/>
<path d="M10 5.800c1.800-1.200 4-1 5.500 0.400l-0.800 1.200c-1.500 0.500-3.200 0.200-4.500-0.600z" fill="#f6c41e"/><path d="M22.500 8c1.800-1.200 4-0.800 5.500 0.800l-1 1c-1.500 0.300-3-0.200-4.300-1z" fill="#f6c41e"/>
<path d="M9.500 5.600c2-1.600 4.500-1.300 6.500 0.400M22 7.800c2-1.500 4.500-1 6.500 1" stroke="#1c0c26" stroke-width="0.800" fill="none"/>
<path d="M12.500 14.500c2.500 2 6.500 2.800 10 1.500c-1 2-3 3-5 3c-2.500-0.500-4-2-5-4.500z" fill="#3a1230"/>
<path d="M13.500 15.200c2.500 1.300 5.500 1.700 8.500 0.800l-0.500 0.800c-2.500 0.500-5.500 0.200-7.500-1z" fill="#fff"/>
<ellipse cx="17.600" cy="17.200" rx="1.500" ry="0.700" fill="#f28a22"/>
<path d="M37.500 14.500c1.500-2.300 5-2.800 7.500-1l5 5.500c1.200 2 0.600 4.400-1.400 5.300c-2.300 0.900-5.200 0-7.500-2.300c-2.300-2.300-4-4.600-3.600-7.500z" fill="#b88a24"/>
<path d="M39.500 14.500l7 8.500M42.500 13.500l6 7.500" stroke="#6a4a10" stroke-width="0.800" fill="none"/><path d="M39 16.500l6 7" stroke="#e0b850" stroke-width="0.600" fill="none"/>
<path d="M47.500 23.500l2-1.500l3.500 2v6h-2z" fill="#e8d0dc"/>
<path d="M47 18l6-3v8l-4 0z" fill="#f8eef4"/>
</g></svg>
<text transform="translate(60.00 160.30) scale(0.97 1)" font-size="8.3" fill="#ffffff" >Kirune</text>
<text x="60.00" y="170.60" font-size="6.5" fill="#ffffff" >機流音</text>
<text transform="translate(59.60 182.10) scale(0.94 1)" font-size="6.5" fill="#ffffff" >ja_JP</text>
<path d="M108 164.70l3 2.900l-3 2.900" stroke="#fff" stroke-width="1.100" fill="none"/>
<rect x="3.40" y="185.00" width="110.50" height="32.30" fill="#ee8200" />
<svg x="4.90" y="185.80" width="53.00" height="30.30" viewBox="0 0 53 30" preserveAspectRatio="none">
<rect width="53" height="30" fill="#fdfdfd"/><g filter="url(#bl)">
<path d="M1.500 9c1.500-4 6-7.500 13-8.500l9-0.500l-1 11l-2.500 8c-2 3-5 4.500-8.500 4l-3-6l-6 1c-1.500-2.500-2-6-1-9z" fill="#b3bdb2"/>
<path d="M3 5c4-3 10-5 17-5l-3 3.500c-5 0-10 2-14 6z" fill="#96a294"/>
<path d="M1.500 14c3-3.500 9-6 15-6l-2 2.500c-5 0.500-9 2.500-12.500 6z" fill="#e6ebe4"/>
<path d="M4 8c3-2 7-3.500 12-4l-1.500 1.800c-4 0.500-7 1.800-10 4z" fill="#d4dbd2"/>
<path d="M3.500 15.500c3-1.500 8-2.500 12.500-1.500l-1.500 4c-3.500 0-5.500 2-6.500 4.500l-3-1.500c-1.500-2-2-4-1.500-5.500z" fill="#ef7a24"/>
<path d="M5 17c2.500-1 5.500-1.500 8.500-1" stroke="#f8b070" stroke-width="0.600" fill="none"/>
<path d="M7 21.500c1.500 1 3 3 3 5.500M12 20c1.500 1.500 2 3.500 1.500 5.500M5 22c0 2 1 4 3 5" stroke="#c9bba6" stroke-width="0.900" fill="none"/>
<path d="M9 21c1 1.500 2 2.500 3.500 3" stroke="#ef7a24" stroke-width="0.900" fill="none"/>
<path d="M40 0h13v14.500c-2 2.500-5 3-7.500 2l-3-8z" fill="#b0bbaf"/>
<path d="M47 0l4 12M43.500 0l5 14" stroke="#909d8f" stroke-width="0.600" fill="none"/>
<path d="M21 18.500l2.300 0.500l1.500 11h-3z" fill="#a9b2a6"/>
<path d="M25 19.500l8 2l2.500 8.500h-11.500z" fill="#4c3524"/>
<path d="M25.500 20l6.500 2l-0.500 2l-6-0.500z" fill="#f0d4c0"/>
<path d="M25 24.500l9.500-1l1 2.500l-10.500 1.500z" fill="#e2842c"/>
<path d="M27 28l3-1l3 1.500l-1 1.500h-5z" fill="#e2842c"/>
<path d="M37 28.500c4-2.500 10-2.500 16-0.500v2h-16z" fill="#fbe9dc"/>
<path d="M43 15.500l2 0.500l-0.700 10.500l-1.300 0z" fill="#ece0d6"/>
<path d="M21.500 5c2-4.500 12-6 20.500-3c2.500 4.500 2.500 10-0.500 14.500c-3 4-8 6-12 5c-5-2-9-9.500-8-16.500z" fill="#fcebde"/>
<path d="M18 0h23l-1 2.800c-5-1.800-12-0.800-17.500 3.700c-1.500 1-2.500 3-3 5l-2-5z" fill="#b6c0b4"/>
<path d="M39 0.500l8.500 1.200l1 8.800c-3-1-6-2.800-9.500-5z" fill="#ef7a24"/>
<path d="M42 1l2 7M45 1.500l1.500 7.500" stroke="#f8a860" stroke-width="0.600" fill="none"/>
<ellipse cx="26.700" cy="7.300" rx="1.900" ry="1.800" fill="#75631e"/><ellipse cx="39.400" cy="11.500" rx="1.900" ry="1.800" fill="#75631e"/>
<path d="M24.300 6.200c1.500-1.400 3.500-1.400 5 0M37 10.200c1.500-1.300 3.600-1.100 5 0.500" stroke="#4a3020" stroke-width="0.800" fill="none"/>
<ellipse cx="26.700" cy="7.500" rx="0.800" ry="0.900" fill="#2e2408"/><ellipse cx="39.400" cy="11.700" rx="0.800" ry="0.900" fill="#2e2408"/>
<ellipse cx="30.500" cy="17.500" rx="1" ry="0.400" fill="#e8a098"/>
</g></svg>
<text transform="translate(60.00 193.40) scale(0.97 1)" font-size="8.3" fill="#ffffff" >Chis-A</text>
<text transform="translate(60.00 203.70) scale(1.085 1)" font-size="6.6" fill="#ffffff" >Chis-A [tʃíːsɑː]</text>
<text transform="translate(59.60 215.20) scale(0.94 1)" font-size="6.5" fill="#ffffff" >en_US</text>
<path d="M108 197.80l3 2.900l-3 2.900" stroke="#fff" stroke-width="1.100" fill="none"/>
<rect x="115.50" y="183.70" width="74.70" height="41.80" fill="#5c5d63" />
<rect x="116.50" y="184.80" width="72.80" height="39.70" fill="#03030f" />
<rect x="116.50" y="184.80" width="72.80" height="19.30" fill="#ee8200" />
<path d="M122.800 194.300l2.900 4.700l5-10" stroke="#fff" stroke-width="1.700" fill="none" stroke-linejoin="miter"/>
<text transform="translate(134.80 198.00) scale(0.875 1)" font-size="8.9" fill="#ffffff" >1.1.0</text>
<text transform="translate(134.80 217.90) scale(0.875 1)" font-size="8.9" fill="#a8a8a8" >1.0.0</text>
<rect x="172.90" y="187.80" width="13.00" height="13.20" fill="#b27a3c" rx="2.200"/>
<g stroke="#d8a662" stroke-width="0.800" fill="none"><path d="M177.200 192h4.600v6.600h-4.600zM176.400 192h6.200M178.400 191h2.200M178.700 193.500v3.800M180.300 193.500v3.800"/></g>
<rect x="172.90" y="208.30" width="13.00" height="13.00" fill="#5a5a5c" rx="2.200"/>
<g stroke="#fff" stroke-width="1.200" fill="none"><path d="M179.400 210.500v5M176.800 213.600l2.600 2.600l2.600-2.600M176 218.600h6.800"/></g>
<path d="M157.300 198.200v8.800l2.100-1.900l1.700 3.700l1.600-0.700l-1.700-3.600l2.800-0.200z" fill="#fff" stroke="#222" stroke-width="0.700" stroke-linejoin="round"/>
</svg>
</body></html>
